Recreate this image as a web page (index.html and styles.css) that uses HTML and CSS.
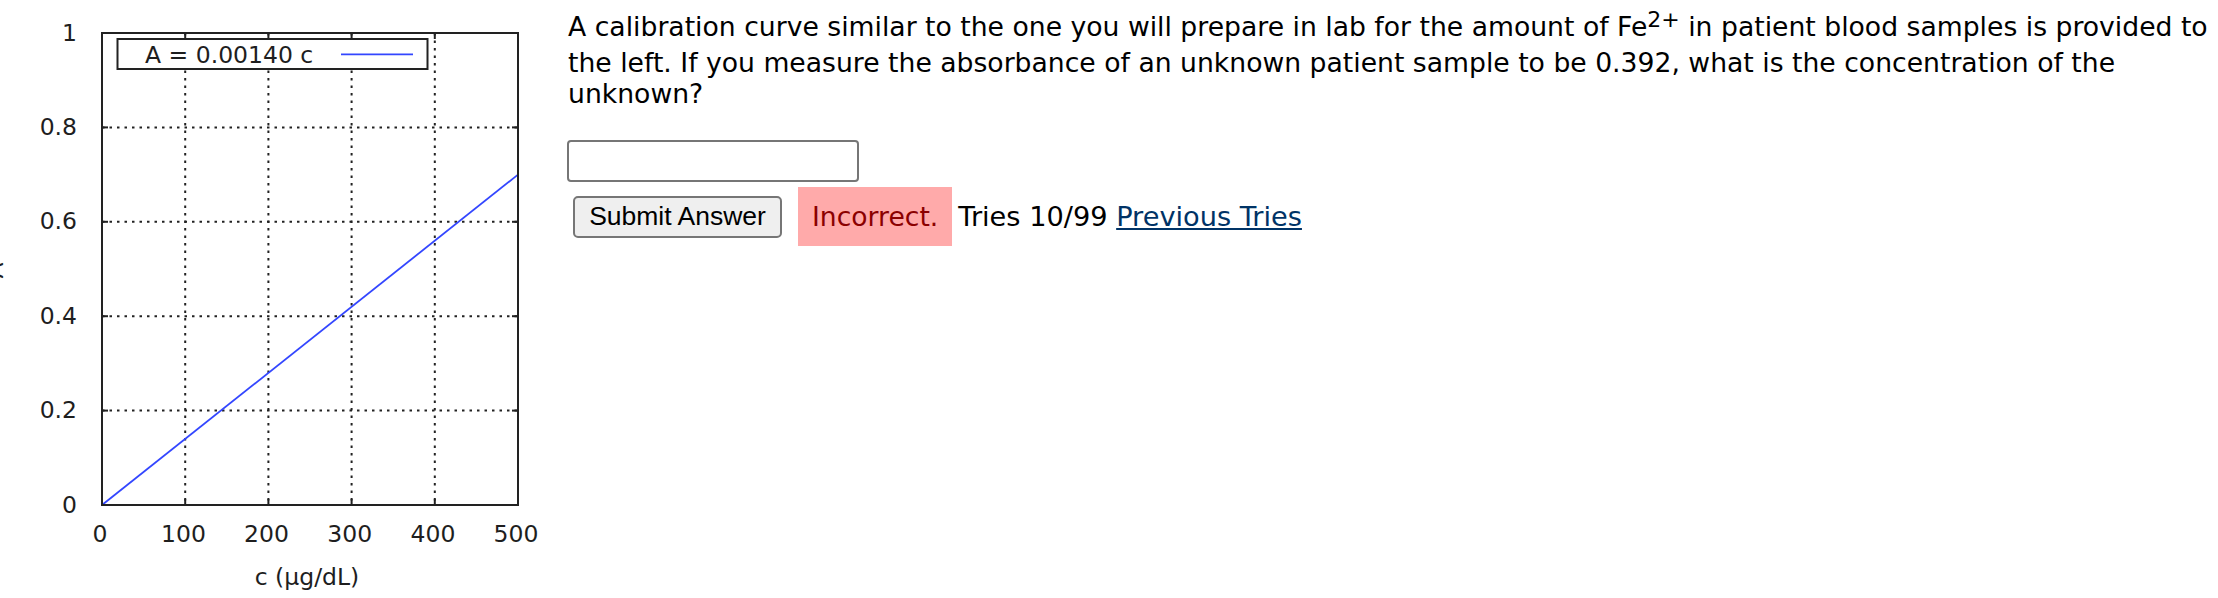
FILE: index.html
```html
<!DOCTYPE html>
<html lang="en">
<head>
<meta charset="utf-8">
<title>Calibration curve problem</title>
<link rel="stylesheet" href="styles.css">
</head>
<body>
<div class="page">
  <svg class="chart" width="560" height="598" viewBox="0 0 560 598" xmlns="http://www.w3.org/2000/svg">
    <g class="grid">
      <line x1="102" y1="127.4" x2="518" y2="127.4"/>
      <line x1="102" y1="221.8" x2="518" y2="221.8"/>
      <line x1="102" y1="316.2" x2="518" y2="316.2"/>
      <line x1="102" y1="410.6" x2="518" y2="410.6"/>
      <line x1="185.2" y1="33" x2="185.2" y2="505"/>
      <line x1="268.4" y1="33" x2="268.4" y2="505"/>
      <line x1="351.6" y1="33" x2="351.6" y2="505"/>
      <line x1="434.8" y1="33" x2="434.8" y2="505"/>
    </g>
    <g class="ticks">
      <line x1="102" y1="127.4" x2="108" y2="127.4"/><line x1="512" y1="127.4" x2="518" y2="127.4"/>
      <line x1="102" y1="221.8" x2="108" y2="221.8"/><line x1="512" y1="221.8" x2="518" y2="221.8"/>
      <line x1="102" y1="316.2" x2="108" y2="316.2"/><line x1="512" y1="316.2" x2="518" y2="316.2"/>
      <line x1="102" y1="410.6" x2="108" y2="410.6"/><line x1="512" y1="410.6" x2="518" y2="410.6"/>
      <line x1="185.2" y1="33" x2="185.2" y2="39"/><line x1="185.2" y1="499" x2="185.2" y2="505"/>
      <line x1="268.4" y1="33" x2="268.4" y2="39"/><line x1="268.4" y1="499" x2="268.4" y2="505"/>
      <line x1="351.6" y1="33" x2="351.6" y2="39"/><line x1="351.6" y1="499" x2="351.6" y2="505"/>
      <line x1="434.8" y1="33" x2="434.8" y2="39"/><line x1="434.8" y1="499" x2="434.8" y2="505"/>
    </g>
    <line class="fit" x1="102" y1="505" x2="518" y2="174.6"/>
    <g class="legend">
      <rect x="117.5" y="39" width="310" height="30"/>
      <text x="145" y="63">A = 0.00140 c</text>
      <line class="fit" x1="341" y1="54.3" x2="413" y2="54.3"/>
    </g>
    <rect class="frame" x="102" y="33" width="416" height="472"/>
    <g class="labels ylabels">
      <text x="77" y="40.6">1</text>
      <text x="77" y="135">0.8</text>
      <text x="77" y="229.4">0.6</text>
      <text x="77" y="323.8">0.4</text>
      <text x="77" y="418.2">0.2</text>
      <text x="77" y="512.6">0</text>
    </g>
    <g class="labels xlabels">
      <text x="100" y="541.7">0</text>
      <text x="183.5" y="541.7">100</text>
      <text x="266.5" y="541.7">200</text>
      <text x="349.8" y="541.7">300</text>
      <text x="433" y="541.7">400</text>
      <text x="516" y="541.7">500</text>
    </g>
    <text class="labels axis-title" x="307" y="585">c (µg/dL)</text>
    <text class="labels axis-title" transform="translate(3 270.5) rotate(-90)">A</text>
  </svg>

  <div class="problem">
    <p class="question">A calibration curve similar to the one you will prepare in lab for the amount of Fe<sup class="charge">2+</sup> in patient blood samples is provided to the left. If you measure the absorbance of an unknown patient sample to be 0.392, what is the concentration of the unknown?</p>
    <input class="answer" type="text" aria-label="Answer">
    <div class="submit-row">
      <button class="submit" type="button">Submit Answer</button>
      <span class="verdict">Incorrect.</span>
      <span class="tries">Tries 10/99 <a href="#" class="prev">Previous Tries</a></span>
    </div>
  </div>
</div>
</body>
</html>
```

FILE: styles.css
```css
html, body {
  margin: 0;
  padding: 0;
  background: #ffffff;
}

.page {
  display: flex;
  align-items: flex-start;
  gap: 8px;
  padding-right: 4px;
}

/* ---------- chart ---------- */
.chart {
  display: block;
  flex: none;
}

.grid line {
  stroke: #222222;
  stroke-width: 2;
  stroke-dasharray: 2.5 5;
}

.ticks line {
  stroke: #222222;
  stroke-width: 2;
}

.fit {
  stroke: #3346ff;
  stroke-width: 1.8;
}

.legend rect {
  fill: #ffffff;
  stroke: #222222;
  stroke-width: 2;
}

.frame {
  fill: none;
  stroke: #222222;
  stroke-width: 2;
}

.chart text,
.labels {
  font-family: "DejaVu Sans", sans-serif;
  font-size: 23.5px;
  fill: #1e1e1e;
}

.ylabels text {
  text-anchor: end;
}

.xlabels text,
.axis-title {
  text-anchor: middle;
}

/* ---------- problem ---------- */
.problem {
  flex: 1;
  min-width: 0;
  font-family: "DejaVu Sans", "Verdana", sans-serif;
  font-size: 26.65px;
  color: #000000;
}

.question {
  margin: 0;
  padding-top: 9px;
  line-height: 31px;
}

.charge {
  display: inline-block;
  font-size: 22px;
  line-height: 22px;
  vertical-align: 9px;
  padding-bottom: 16px;
}

.answer {
  display: block;
  box-sizing: border-box;
  width: 292px;
  height: 42px;
  margin: 31px 0 0 -1px;
  padding: 0 6px;
  border: 2px solid #767676;
  border-radius: 4px;
  background: #ffffff;
  font-size: 26px;
}

.submit-row {
  display: flex;
  align-items: center;
  margin-top: 5px;
}

.submit {
  box-sizing: border-box;
  width: 209px;
  height: 42px;
  margin: 0 16px 0 5px;
  padding: 0;
  border: 2px solid #767676;
  border-radius: 5px;
  background: #efefef;
  color: #000000;
  font-family: "Liberation Sans", Arial, sans-serif;
  font-size: 26.5px;
}

.verdict {
  padding: 14px 14px;
  line-height: 31px;
  background: #ffaaaa;
  color: #8b0000;
  font-size: 26.6px;
}

.tries {
  margin-left: 6px;
  line-height: 31px;
  font-size: 27.2px;
}

.prev {
  color: #003366;
  text-decoration: underline;
}
```
